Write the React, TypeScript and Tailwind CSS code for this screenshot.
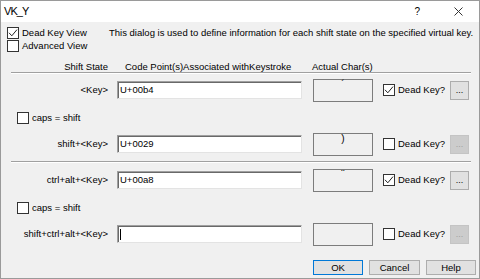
import React from "react";

interface KeyRowProps {
    label: string;
    code: string;
    ch: string;
    dead: boolean;
    cursor?: boolean;
}

function Check({ checked }: { checked: boolean }) {
    return (
        <span className="w-[12px] h-[12px] border border-[#333333] bg-white flex items-center justify-center shrink-0">
            {checked && (
                <svg width="10" height="10" viewBox="0 0 10 10">
                    <path d="M1 4.8 L3.8 7.8 L9 1.6" fill="none" stroke="#222222" strokeWidth="1" />
                </svg>
            )}
        </span>
    );
}

function Separator() {
    return <div className="ml-[10px] w-[460px] h-[2px] border-t border-t-[#a0a0a0] border-b border-b-white" />;
}

function KeyRow({ label, code, ch, dead, cursor }: KeyRowProps) {
    return (
        <div className="flex items-center h-[24px]">
            <div className="w-[107px] text-right whitespace-nowrap">{label}</div>
            <div className="ml-[9px] w-[185px] h-[18px] bg-white border-t border-l border-[#a0a0a0] border-r-[#e3e3e3] border-b-[#e3e3e3] border-r border-b shadow-[inset_1px_1px_0_#696969] flex items-center pl-[2px]">
                {code}
                {cursor && <span className="w-px h-[11px] bg-black" />}
            </div>
            <div className="ml-[11px] w-[60px] h-[23px] border border-[#7c7c7c] text-center text-[10px] leading-[9px]">
                {ch}
            </div>
            <div className="ml-[10px] flex items-center w-[67px]">
                <Check checked={dead} />
                <span className="ml-[3px]">Dead Key?</span>
            </div>
            {dead ? (
                <div className="w-[19px] h-[19px] bg-[#e1e1e1] border border-[#adadad] flex items-center justify-center text-[9px] leading-none">
                    ...
                </div>
            ) : (
                <div className="w-[19px] h-[19px] bg-[#cccccc] border border-[#c4c4c4] flex items-center justify-center text-[9px] leading-none text-[#a0a0a0]">
                    ...
                </div>
            )}
        </div>
    );
}

function CapsRow() {
    return (
        <div className="flex items-center h-[12px] pl-[16px]">
            <Check checked={false} />
            <span className="ml-[3px]">caps = shift</span>
        </div>
    );
}

export default function App() {
    return (
        <div className="w-[480px] h-[279px] border border-[#9a9a9a] bg-[#f0f0f0] flex flex-col text-[9.5px] text-black font-['Liberation_Sans',Arial,sans-serif] overflow-hidden">
            {/* title bar */}
            <div className="h-[21px] bg-white flex items-center shrink-0">
                <span className="ml-[3px] text-[11px] tracking-[-0.9px]">VK_Y</span>
                <span className="ml-auto mr-[34px] text-[10px]">?</span>
                <svg className="mr-[16px]" width="9" height="9" viewBox="0 0 9 9">
                    <path d="M0.5 0.5 L8.5 8.5 M8.5 0.5 L0.5 8.5" stroke="#333333" strokeWidth="1" />
                </svg>
            </div>

            {/* options */}
            <div className="flex pt-[5px] pl-[6px]">
                <div className="w-[102px] flex flex-col gap-[1px]">
                    <div className="flex items-center h-[12px]">
                        <Check checked={true} />
                        <span className="ml-[3px]">Dead Key View</span>
                    </div>
                    <div className="flex items-center h-[12px]">
                        <Check checked={false} />
                        <span className="ml-[3px]">Advanced View</span>
                    </div>
                </div>
                <div className="h-[12px] leading-[12px] whitespace-nowrap">
                    This dialog is used to define information for each shift state on the specified virtual key.
                </div>
            </div>

            {/* header */}
            <div className="flex mt-[9px] h-[11px] leading-[11px] whitespace-nowrap">
                <div className="w-[107px] text-right">Shift State</div>
                <div className="ml-[17px] w-[187px]">Code Point(s)Associated withKeystroke</div>
                <div>Actual Char(s)</div>
            </div>
            <Separator />

            <div className="mt-[4px]">
                <KeyRow label="<Key>" code="U+00b4" ch="´" dead={true} />
            </div>
            <div className="mt-[10px]">
                <CapsRow />
            </div>
            <div className="mt-[8px]">
                <KeyRow label="shift+<Key>" code="U+0029" ch=")" dead={false} />
            </div>

            <div className="mt-[5px]">
                <Separator />
            </div>

            <div className="mt-[5px]">
                <KeyRow label="ctrl+alt+<Key>" code="U+00a8" ch="¨" dead={true} />
            </div>
            <div className="mt-[10px]">
                <CapsRow />
            </div>
            <div className="mt-[8px]">
                <KeyRow label="shift+ctrl+alt+<Key>" code="" ch="" dead={false} cursor={true} />
            </div>

            {/* buttons */}
            <div className="flex justify-end gap-[6px] pr-[3px] mt-[14px]">
                <button className="w-[50px] h-[15px] bg-[#e1e1e1] border border-[#0078d7] flex items-center justify-center leading-none">
                    OK
                </button>
                <button className="w-[51px] h-[15px] bg-[#e1e1e1] border border-[#adadad] flex items-center justify-center leading-none">
                    Cancel
                </button>
                <button className="w-[50px] h-[15px] bg-[#e1e1e1] border border-[#adadad] flex items-center justify-center leading-none">
                    Help
                </button>
            </div>
        </div>
    );
}
